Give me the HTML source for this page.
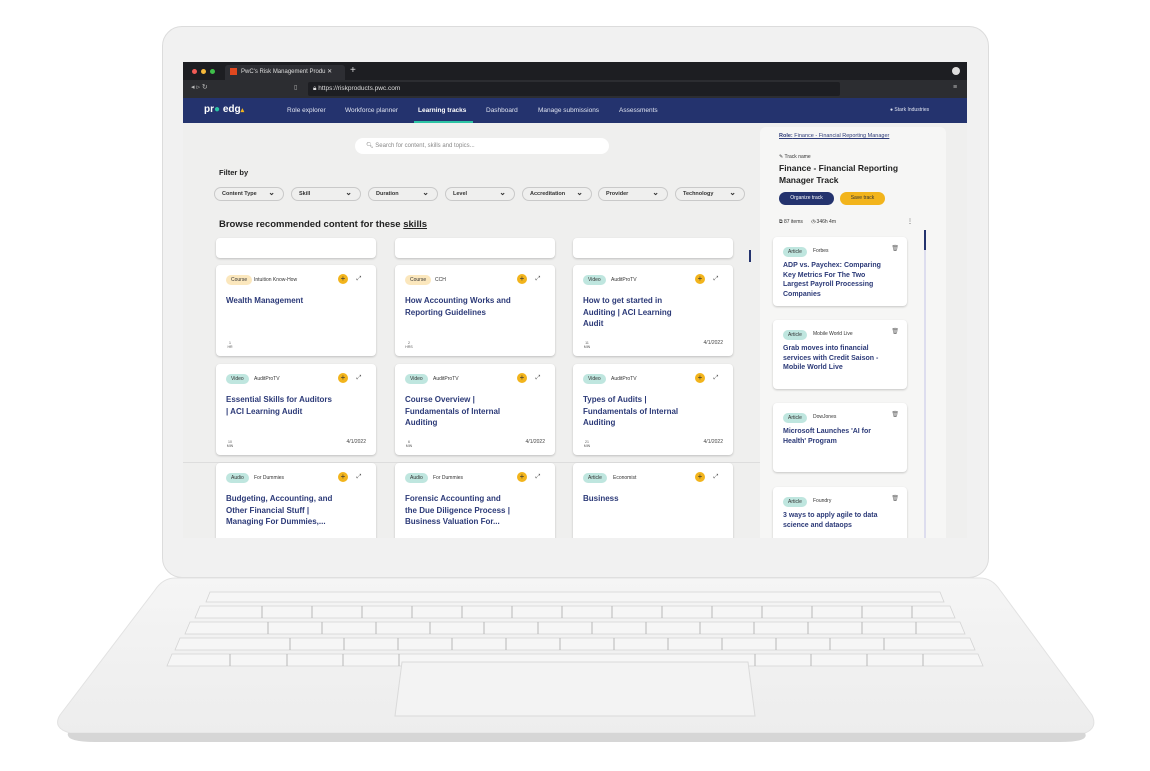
<!DOCTYPE html>
<html><head><meta charset="utf-8"><style>
*{margin:0;padding:0;box-sizing:border-box}
body{width:1150px;height:771px;background:#fff;position:relative;overflow:hidden;font-family:"Liberation Sans",sans-serif}
.a{position:absolute}
.lid{left:162px;top:26px;width:827px;height:552px;background:#f1f1f1;border-radius:20px;border:1px solid #dcdcdc}
.scr{left:183px;top:62px;width:784px;height:476px;background:#efefee;overflow:hidden}
.nav span{position:absolute;top:9px;font-size:6.5px;color:#dfe3f0}
.chip{position:absolute;top:125px;height:14px;width:70px;border:1px solid #c9c9c9;border-radius:8px;font-size:5.5px;font-weight:bold;color:#333;padding:3px 0 0 7px}
.chip:after{content:"⌄";position:absolute;right:8px;top:0px;font-size:8px}
.card{position:absolute;background:#fff;border-radius:4px;box-shadow:0 1px 2px rgba(0,0,0,.2)}
.tag{position:absolute;left:10px;top:10px;font-size:5px;padding:2px 5px;border-radius:5px;color:#333}
.co{background:#fbe7bd}.vi{background:#bfe6df}
.prov{position:absolute;top:12px;left:38px;font-size:5px;color:#333}
.plus{position:absolute;top:9px;right:28px;width:10px;height:10px;border-radius:50%;background:#f2b41c;color:#333;font-size:8px;line-height:10px;text-align:center}
.exp{position:absolute;top:9px;right:12px;width:10px;height:10px;border-radius:50%;font-size:6px;line-height:10px;text-align:center;color:#444}
.tt{position:absolute;left:10px;top:30px;font-size:8px;font-weight:bold;color:#2c3a78;line-height:11.5px;width:108px}
.dur{position:absolute;left:10px;bottom:7px;font-size:3.5px;color:#555;width:8px;text-align:center}
.dt{position:absolute;right:10px;bottom:10px;font-size:5px;color:#444}
.rc{position:absolute;left:590px;width:134px;background:#fff;border-radius:4px;box-shadow:0 1px 2px rgba(0,0,0,.2)}
.rc .tag{background:#bfe6df}
.rc .prov{left:40px;top:11px}
.bin{position:absolute;right:8px;top:8px;font-size:6px;color:#666}
.rc .tt{top:24px;width:102px;font-size:7px;line-height:9.5px}
</style></head><body>
<div class="a lid"></div>
<div class="a scr">
 <div class="a" style="left:0;top:0;width:784px;height:18px;background:#1d1e22"></div>
 <div class="a" style="left:9px;top:7px;width:5px;height:5px;border-radius:50%;background:#f25b55"></div>
 <div class="a" style="left:18px;top:7px;width:5px;height:5px;border-radius:50%;background:#f5b83a"></div>
 <div class="a" style="left:27px;top:7px;width:5px;height:5px;border-radius:50%;background:#3fbf4a"></div>
 <div class="a" style="left:42px;top:3px;width:120px;height:15px;background:#2d2e33;border-radius:3px 3px 0 0"></div>
 <div class="a" style="left:47px;top:6px;width:7px;height:7px;background:#e0481f"></div>
 <div class="a" style="left:58px;top:6px;font-size:6px;color:#ddd">PwC's Risk Management Produ ✕</div>
 <div class="a" style="left:167px;top:3px;font-size:10px;color:#ddd">+</div>
 <div class="a" style="left:769px;top:5px;width:8px;height:8px;border-radius:50%;background:#ddd"></div>
 <div class="a" style="left:0;top:18px;width:784px;height:18px;background:#2c2d31"></div>
 <div class="a" style="left:8px;top:21px;font-size:7px;color:#bbb">◂ ▹ ↻</div>
 <div class="a" style="left:111px;top:22px;font-size:6px;color:#bbb">▯</div>
 <div class="a" style="left:125px;top:20px;width:532px;height:14px;background:#1d1e22;border-radius:2px"></div>
 <div class="a" style="left:130px;top:23px;font-size:6.5px;color:#ddd">🔒︎ https://riskproducts.pwc.com</div>
 <div class="a" style="left:770px;top:22px;font-size:7px;color:#bbb">≡</div>
 <div class="a nav" style="left:0;top:36px;width:784px;height:25px;background:#24336e">
  <span style="left:21px;top:6px;font-size:10px;font-weight:bold;color:#fff">pr<b style="color:#2cc3a4">●</b> edg<b style="color:#f2b41c;font-size:7px">▴</b></span>
  <span style="left:104px">Role explorer</span><span style="left:162px">Workforce planner</span>
  <span style="left:235px;font-weight:bold;color:#fff">Learning tracks</span>
  <span style="left:303px">Dashboard</span><span style="left:355px">Manage submissions</span><span style="left:436px">Assessments</span>
  <div class="a" style="left:231px;top:23px;width:59px;height:2px;background:#2cc3a4"></div>
  <span style="left:707px;font-size:5px">● Stark Industries</span>
 </div>
 <div class="a" style="left:172px;top:76px;width:254px;height:16px;background:#fff;border-radius:8px;font-size:6px;color:#888;padding:4px 0 0 11px">🔍︎ Search for content, skills and topics...</div>
 <div class="a" style="left:36px;top:106px;font-size:7.5px;font-weight:bold;color:#222">Filter by</div>
 <div class="chip" style="left:31px">Content Type</div><div class="chip" style="left:108px">Skill</div><div class="chip" style="left:185px">Duration</div><div class="chip" style="left:262px">Level</div><div class="chip" style="left:339px">Accreditation</div><div class="chip" style="left:415px">Provider</div><div class="chip" style="left:492px">Technology</div>
 <div class="a" style="left:36px;top:157px;font-size:9.5px;font-weight:bold;color:#222">Browse recommended content for these <u>skills</u></div>
 <div class="a" style="left:0;top:400px;width:580px;height:1px;background:#ddd"></div>
 <div class="card" style="left:33px;top:176px;width:160px;height:20px"></div>
 <div class="card" style="left:212px;top:176px;width:160px;height:20px"></div>
 <div class="card" style="left:390px;top:176px;width:160px;height:20px"></div>
 <div class="a" style="left:566px;top:188px;width:2px;height:12px;background:#24336e"></div>

 <div class="card" style="left:33px;top:203px;width:160px;height:91px"><span class="tag co">Course</span><span class="prov">Intuition Know-How</span><span class="plus">+</span><span class="exp">⤢</span><div class="tt">Wealth Management</div><div class="dur">1<br>HR</div></div>
 <div class="card" style="left:212px;top:203px;width:160px;height:91px"><span class="tag co">Course</span><span class="prov" style="left:40px">CCH</span><span class="plus">+</span><span class="exp">⤢</span><div class="tt">How Accounting Works and Reporting Guidelines</div><div class="dur">2<br>HRS</div></div>
 <div class="card" style="left:390px;top:203px;width:160px;height:91px"><span class="tag vi">Video</span><span class="prov">AuditProTV</span><span class="plus">+</span><span class="exp">⤢</span><div class="tt">How to get started in Auditing | ACI Learning Audit</div><div class="dur">11<br>MIN</div><div class="dt">4/1/2022</div></div>

 <div class="card" style="left:33px;top:302px;width:160px;height:91px"><span class="tag vi">Video</span><span class="prov">AuditProTV</span><span class="plus">+</span><span class="exp">⤢</span><div class="tt">Essential Skills for Auditors | ACI Learning Audit</div><div class="dur">10<br>MIN</div><div class="dt">4/1/2022</div></div>
 <div class="card" style="left:212px;top:302px;width:160px;height:91px"><span class="tag vi">Video</span><span class="prov">AuditProTV</span><span class="plus">+</span><span class="exp">⤢</span><div class="tt">Course Overview | Fundamentals of Internal Auditing</div><div class="dur">6<br>MIN</div><div class="dt">4/1/2022</div></div>
 <div class="card" style="left:390px;top:302px;width:160px;height:91px"><span class="tag vi">Video</span><span class="prov">AuditProTV</span><span class="plus">+</span><span class="exp">⤢</span><div class="tt">Types of Audits | Fundamentals of Internal Auditing</div><div class="dur">21<br>MIN</div><div class="dt">4/1/2022</div></div>

 <div class="card" style="left:33px;top:401px;width:160px;height:91px"><span class="tag vi">Audio</span><span class="prov">For Dummies</span><span class="plus">+</span><span class="exp">⤢</span><div class="tt">Budgeting, Accounting, and Other Financial Stuff | Managing For Dummies,...</div></div>
 <div class="card" style="left:212px;top:401px;width:160px;height:91px"><span class="tag vi">Audio</span><span class="prov">For Dummies</span><span class="plus">+</span><span class="exp">⤢</span><div class="tt">Forensic Accounting and the Due Diligence Process | Business Valuation For...</div></div>
 <div class="card" style="left:390px;top:401px;width:160px;height:91px"><span class="tag vi">Article</span><span class="prov" style="left:40px">Economist</span><span class="plus">+</span><span class="exp">⤢</span><div class="tt">Business</div></div>

 <div class="a" style="left:577px;top:65px;width:186px;height:420px;background:#f6f6f5;border-radius:6px"></div>
 <div class="a" style="left:596px;top:71px;font-size:5.5px;color:#2c3a78;text-decoration:underline"><b>Role:</b> Finance - Financial Reporting Manager</div>
 <div class="a" style="left:596px;top:92px;font-size:5px;color:#333">✎ Track name</div>
 <div class="a" style="left:596px;top:101px;font-size:8.5px;font-weight:bold;color:#222;line-height:11.5px">Finance - Financial Reporting<br>Manager Track</div>
 <div class="a" style="left:596px;top:130px;width:55px;height:13px;border-radius:7px;background:#24336e;color:#fff;font-size:5px;text-align:center;line-height:13px">Organize track</div>
 <div class="a" style="left:657px;top:130px;width:45px;height:13px;border-radius:7px;background:#f2b41c;color:#333;font-size:5px;text-align:center;line-height:13px">Save track</div>
 <div class="a" style="left:596px;top:157px;font-size:5px;color:#333">⧉ 87 items &nbsp;&nbsp;&nbsp;&nbsp; ◷ 346h 4m</div>
 <div class="a" style="left:724px;top:156px;font-size:6px;color:#333">⋮</div>
 <div class="a" style="left:741px;top:168px;width:2px;height:308px;background:#dde"></div>
 <div class="a" style="left:741px;top:168px;width:2px;height:20px;background:#24336e"></div>
 <div class="rc" style="top:175px;height:69px"><span class="tag">Article</span><span class="prov">Forbes</span><span class="bin">🗑︎</span><div class="tt">ADP vs. Paychex: Comparing Key Metrics For The Two Largest Payroll Processing Companies</div></div>
 <div class="rc" style="top:258px;height:69px"><span class="tag">Article</span><span class="prov">Mobile World Live</span><span class="bin">🗑︎</span><div class="tt">Grab moves into financial services with Credit Saison - Mobile World Live</div></div>
 <div class="rc" style="top:341px;height:69px"><span class="tag">Article</span><span class="prov">DowJones</span><span class="bin">🗑︎</span><div class="tt">Microsoft Launches 'AI for Health' Program</div></div>
 <div class="rc" style="top:425px;height:69px"><span class="tag">Article</span><span class="prov">Foundry</span><span class="bin">🗑︎</span><div class="tt">3 ways to apply agile to data science and dataops</div></div>
</div>
<svg class="a" style="left:0;top:0" width="1150" height="771">
 <defs><linearGradient id="g" x1="0" y1="0" x2="0" y2="1"><stop offset="0" stop-color="#f5f5f5"/><stop offset="1" stop-color="#ededed"/></linearGradient></defs>
 <path d="M175 578 L980 578 Q992 578 1000 590 L1092 715 Q1098 728 1085 733 L70 733 Q52 728 60 715 L155 590 Q163 578 175 578Z" fill="url(#g)" stroke="#e2e2e2"/>
 <path d="M68 733 L1085 733 Q1090 742 1060 742 L95 742 Q65 742 68 733Z" fill="#d6d6d6"/>
 <g fill="#f6f6f6" stroke="#d4d4d4" stroke-width="0.8">
  <path d="M210 592 L940 592 L944 602 L206 602Z"/>
  <path d="M200 606 L950 606 L955 618 L195 618Z"/>
  <path d="M190 622 L960 622 L965 634 L185 634Z"/>
  <path d="M180 638 L970 638 L975 650 L175 650Z"/>
  <path d="M172 654 L978 654 L983 666 L167 666Z"/>
 </g>
 <g stroke="#b8b8b8" stroke-width="1">
  <path d="M262 606v12M312 606v12M362 606v12M412 606v12M462 606v12M512 606v12M562 606v12M612 606v12M662 606v12M712 606v12M762 606v12M812 606v12M862 606v12M912 606v12"/>
  <path d="M268 622v12M322 622v12M376 622v12M430 622v12M484 622v12M538 622v12M592 622v12M646 622v12M700 622v12M754 622v12M808 622v12M862 622v12M916 622v12"/>
  <path d="M290 638v12M344 638v12M398 638v12M452 638v12M506 638v12M560 638v12M614 638v12M668 638v12M722 638v12M776 638v12M830 638v12M884 638v12"/>
  <path d="M230 654v12M287 654v12M343 654v12M399 654v12M755 654v12M811 654v12M867 654v12M923 654v12"/>
 </g>
 <path d="M402 662 L748 662 L755 716 L395 716Z" fill="#f3f3f3" stroke="#dadada"/>
</svg>
</body></html>
